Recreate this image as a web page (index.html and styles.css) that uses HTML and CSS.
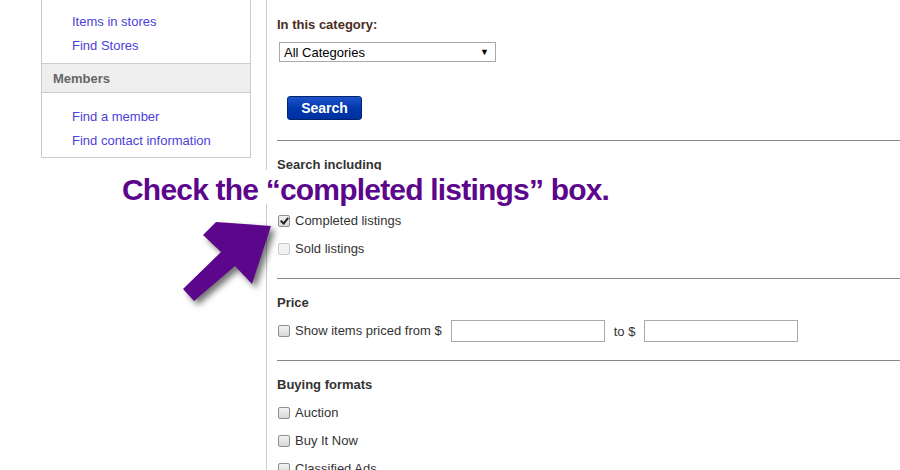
FILE: index.html
```html
<!DOCTYPE html>
<html lang="en">
<head>
<meta charset="utf-8">
<title>Advanced Search</title>
<link rel="stylesheet" href="styles.css">
</head>
<body>
<div class="page">
  <aside class="side">
    <div class="box">
      <ul class="links links-top">
        <li><a href="#">Items in stores</a></li>
        <li><a href="#">Find Stores</a></li>
      </ul>
      <div class="box-head">Members</div>
      <ul class="links links-bottom">
        <li><a href="#">Find a member</a></li>
        <li><a href="#">Find contact information</a></li>
      </ul>
    </div>
  </aside>

  <main class="main">
    <div class="cat">
      <div class="cat-label">In this category:</div>
      <div class="select-wrap">
        <select class="select"><option>All Categories</option></select>
        <span class="select-arrow">▼</span>
      </div>
      <button class="btn" type="button">Search</button>
    </div>

    <section class="section sec-including">
      <h3 class="sec-title">Search including</h3>
      <div class="rows">
        <label class="row"><input class="cb" type="checkbox" checked><span>Completed listings</span></label>
        <label class="row row-disabled"><input class="cb" type="checkbox" disabled><span>Sold listings</span></label>
      </div>
    </section>

    <section class="section sec-price">
      <h3 class="sec-title">Price</h3>
      <div class="price-row">
        <label class="row"><input class="cb" type="checkbox"><span>Show items priced from $</span></label>
        <input class="txt txt-from" type="text">
        <span class="to">to $</span>
        <input class="txt txt-to" type="text">
      </div>
    </section>

    <section class="section sec-formats">
      <h3 class="sec-title">Buying formats</h3>
      <div class="rows">
        <label class="row"><input class="cb" type="checkbox"><span>Auction</span></label>
        <label class="row"><input class="cb" type="checkbox"><span>Buy It Now</span></label>
        <label class="row"><input class="cb" type="checkbox"><span>Classified Ads</span></label>
      </div>
    </section>
  </main>

  <div class="callout">Check the “completed listings” box.</div>
  <svg class="arrow" width="120" height="100" viewBox="0 0 120 100">
    <polygon points="13,79 51,42 33,25 46,12 101,16 82,74 65,56 24,91" fill="#5c068c"/>
  </svg>
</div>
</body>
</html>
```

FILE: styles.css
```css
* { box-sizing: border-box; }
html, body { margin: 0; padding: 0; background: #fff; }
body {
  font-family: "Liberation Sans", Arial, sans-serif;
  font-size: 13px;
  color: #333;
}
.page {
  position: relative;
  display: flex;
  width: 900px;
  height: 470px;
  overflow: hidden;
}

/* sidebar */
.side { width: 266px; flex: none; }
.box {
  margin-left: 41px;
  width: 210px;
  border: 1px solid #ccc;
  border-top: none;
}
.links { list-style: none; margin: 0; padding: 0 0 0 30px; line-height: 24px; }
.links-top { padding-top: 10px; padding-bottom: 5px; }
.links-bottom { padding-top: 12px; padding-bottom: 4px; }
.links a { color: #4b3fd9; text-decoration: none; }
.box-head {
  background: #eee;
  border-top: 1px solid #ccc;
  border-bottom: 1px solid #ccc;
  height: 30px;
  line-height: 28px;
  padding-left: 11px;
  padding-top: 1px;
  font-weight: bold;
  color: #666;
}

/* main */
.main {
  flex: 1;
  border-left: 1px solid #ccc;
  padding-left: 10px;
}
.cat { padding-top: 15px; padding-bottom: 20px; }
.cat-label { font-weight: bold; line-height: 20px; color: #4a2c22; }
.select-wrap {
  position: relative;
  margin: 7px 0 0 2px;
  width: 217px;
  height: 20px;
}
.select {
  appearance: none;
  -webkit-appearance: none;
  width: 100%;
  height: 20px;
  margin: 0;
  border: 1px solid #a9a9a9;
  border-radius: 0;
  background: #fff;
  padding: 0 0 0 4px;
  font-family: "Liberation Sans", Arial, sans-serif;
  font-size: 13px;
  color: #000;
}
.select-arrow {
  position: absolute;
  right: 7px;
  top: 4px;
  font-size: 9px;
  line-height: 12px;
  color: #000;
  pointer-events: none;
}
.btn {
  display: block;
  margin: 34px 0 0 10px;
  width: 75px;
  height: 24px;
  padding: 0;
  border: 1px solid #00236e;
  border-radius: 3px;
  background: linear-gradient(#1f52c8, #0037ad 55%, #0030a0);
  color: #fff;
  font-family: "Liberation Sans", Arial, sans-serif;
  font-weight: bold;
  font-size: 14px;
  line-height: 22px;
}

.section { border-top: 1px solid #888; padding-top: 14px; }
.sec-title { margin: 0; font-size: 13px; font-weight: bold; line-height: 20px; color: #333; }
.sec-including { padding-bottom: 19px; }
.sec-including .rows { margin-top: 36px; }
.sec-price { padding-bottom: 18px; }
.sec-formats .rows { margin-top: 8px; }
.rows { display: flex; flex-direction: column; gap: 8px; }

.row {
  display: flex;
  align-items: center;
  gap: 5px;
  height: 20px;
  line-height: 20px;
  color: #333;
}
.cb {
  appearance: none;
  -webkit-appearance: none;
  margin: 0 0 0 1px;
  width: 12px;
  height: 12px;
  border: 1px solid #8e8f8f;
  border-radius: 2px;
  background: linear-gradient(#f2f2f2, #d8d8d8);
  position: relative;
  flex: none;
}
.cb:checked::after {
  content: "";
  position: absolute;
  left: 3px;
  top: 0px;
  width: 3px;
  height: 6px;
  border-right: 2px solid #222;
  border-bottom: 2px solid #222;
  transform: rotate(40deg);
}
.cb:disabled {
  border-color: #c9c9c9;
  background: #f2f2f2;
}

.price-row {
  display: flex;
  align-items: center;
  margin-top: 7px;
  height: 22px;
}
.txt {
  width: 154px;
  height: 22px;
  border: 1px solid #aaa;
  padding: 0 3px;
  font-family: "Liberation Sans", Arial, sans-serif;
  font-size: 13px;
}
.txt-from { margin: 0 0 0 9px; }
.txt-to { margin: 0 0 0 9px; }
.to { margin-left: 9px; }

/* overlay annotation */
.callout {
  position: absolute;
  left: 122px;
  top: 170px;
  padding-top: 6px;
  background: #fff;
  font-family: "Liberation Sans", Arial, sans-serif;
  font-weight: bold;
  font-size: 30px;
  line-height: 28px;
  letter-spacing: -0.8px;
  color: #5c068c;
  white-space: nowrap;
}
.arrow {
  position: absolute;
  left: 170px;
  top: 210px;
  filter: drop-shadow(4px 4px 3px rgba(0, 0, 0, 0.55));
}
```
